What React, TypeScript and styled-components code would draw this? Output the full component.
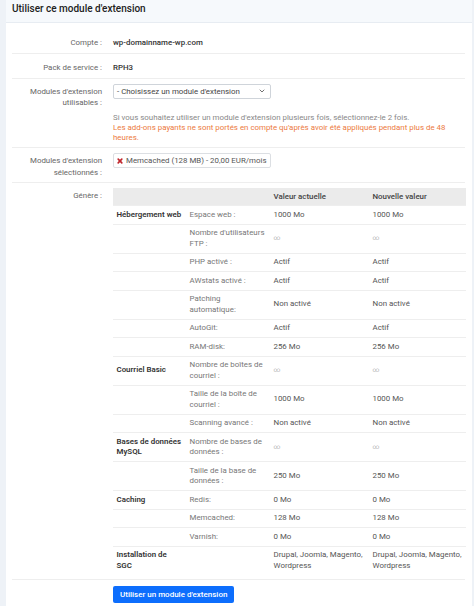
import React from "react";
import styled, { createGlobalStyle } from "styled-components";

const GlobalStyle = createGlobalStyle`
    html, body {
        margin: 0;
        padding: 0;
        background: #eef2f7;
        font-family: Roboto, "Liberation Sans", Arial, sans-serif;
        font-size: 7.9px;
        color: #555;
    }
`;

const Page = styled.div`
    padding: 0 2px 0 6px;
    min-height: 606px;
`;

const Card = styled.div`
    background: #ffffff;
    min-height: 606px;
`;

const CardHeader = styled.div`
    background: #f6f9fc;
    border-bottom: 1px solid #e7ecf2;
    padding: 3px 6px 8px;
    font-size: 10px;
    line-height: 11px;
    font-weight: 500;
    color: #222;
`;

const CardBody = styled.div`
    padding: 5.5px 7px 0 6px;
`;

const FormRow = styled.div<{ $top?: number; $bottom?: number; $noBorder?: boolean }>`
    display: grid;
    grid-template-columns: 90px 1fr;
    column-gap: 11px;
    padding: ${(p) => p.$top ?? 8}px 0 ${(p) => p.$bottom ?? 4.5}px;
    border-bottom: ${(p) => (p.$noBorder ? "none" : "1px solid #eeeeee")};
`;

const Label = styled.div<{ $pad?: number }>`
    text-align: right;
    color: #666;
    line-height: 11.5px;
    padding-top: ${(p) => p.$pad ?? 0}px;
`;

const Value = styled.div<{ $strong?: boolean }>`
    line-height: 11px;
    color: ${(p) => (p.$strong ? "#333" : "#555")};
    font-weight: ${(p) => (p.$strong ? 500 : 400)};
    min-width: 0;
`;

const Select = styled.div`
    width: 158px;
    height: 15px;
    box-sizing: border-box;
    border: 1px solid #cfd4da;
    border-radius: 2px;
    display: flex;
    align-items: center;
    justify-content: space-between;
    padding: 0 4px 0 3px;
    color: #444;
    background: #fff;
`;

const Help = styled.p<{ $warn?: boolean }>`
    margin: 0;
    line-height: 10px;
    color: ${(p) => (p.$warn ? "#ec7a3e" : "#888")};
`;

const HelpBlock = styled.div`
    margin-top: 14.5px;
`;

const Tag = styled.div`
    display: inline-flex;
    align-items: center;
    gap: 3px;
    height: 15px;
    box-sizing: border-box;
    border: 1px solid #dcdfe3;
    border-radius: 2px;
    padding: 0 4px 0 3px;
    color: #555;
`;

const Table = styled.table`
    width: calc(100% + 1px);
    border-collapse: collapse;
    table-layout: fixed;
`;

const Th = styled.th`
    background: #ebebeb;
    text-align: left;
    font-weight: 500;
    color: #444;
    padding: 3px 2px 3px 3.5px;
    line-height: 11px;
`;

const Td = styled.td<{ $kind?: "group" | "label" | "value" | "infinite" }>`
    padding: 3.5px 2px 3.5px 3.5px;
    line-height: 10.5px;
    vertical-align: middle;
    white-space: pre-line;
    border-top: 1px solid #eeeeee;
    font-weight: ${(p) => (p.$kind === "group" ? 600 : 400)};
    font-size: ${(p) => (p.$kind === "infinite" ? "6.5px" : "inherit")};
    color: ${(p) =>
        p.$kind === "group" ? "#333" : p.$kind === "label" ? "#777" : p.$kind === "infinite" ? "#b5b5b5" : "#555"};
`;

const Button = styled.button`
    background: #0d6efd;
    color: #fff;
    border: none;
    border-radius: 2px;
    height: 17px;
    padding: 0 7px;
    font-family: inherit;
    font-size: 8px;
    font-weight: 500;
    cursor: pointer;
`;

function Chevron() {
    return (
        <svg width="8" height="8" viewBox="0 0 24 24" fill="none" stroke="#555" strokeWidth="2.5" strokeLinecap="round" strokeLinejoin="round">
            <path d="m6 9 6 6 6-6" />
        </svg>
    );
}

function RemoveIcon() {
    return (
        <svg width="6" height="6" viewBox="0 0 10 10" stroke="#c0262d" strokeWidth="2.8" strokeLinecap="round">
            <path d="M2 2 8 8M8 2 2 8" />
        </svg>
    );
}

type Row = { group?: string; label: string; current: string; next: string };

const rows: Row[] = [
    { group: "Hébergement web", label: "Espace web :", current: "1000 Mo", next: "1000 Mo" },
    { label: "Nombre d'utilisateurs FTP :", current: "∞", next: "∞" },
    { label: "PHP activé :", current: "Actif", next: "Actif" },
    { label: "AWstats activé :", current: "Actif", next: "Actif" },
    { label: "Patching automatique:", current: "Non activé", next: "Non activé" },
    { label: "AutoGit:", current: "Actif", next: "Actif" },
    { label: "RAM-disk:", current: "256 Mo", next: "256 Mo" },
    { group: "Courriel Basic", label: "Nombre de boîtes de courriel :", current: "∞", next: "∞" },
    { label: "Taille de la boîte de courriel :", current: "1000 Mo", next: "1000 Mo" },
    { label: "Scanning avancé :", current: "Non activé", next: "Non activé" },
    { group: "Bases de données MySQL", label: "Nombre de bases de données :", current: "∞", next: "∞" },
    { label: "Taille de la base de données :", current: "250 Mo", next: "250 Mo" },
    { group: "Caching", label: "Redis:", current: "0 Mo", next: "0 Mo" },
    { label: "Memcached:", current: "128 Mo", next: "128 Mo" },
    { label: "Varnish:", current: "0 Mo", next: "0 Mo" },
    { group: "Installation de\nSGC", label: "", current: "Drupal, Joomla, Magento, Wordpress", next: "Drupal, Joomla, Magento, Wordpress" },
];

export default function App() {
    return (
        <>
            <GlobalStyle />
            <Page>
                <Card>
                    <CardHeader>Utiliser ce module d'extension</CardHeader>
                    <CardBody>
                        <FormRow>
                            <Label>Compte :</Label>
                            <Value $strong>wp-domainname-wp.com</Value>
                        </FormRow>
                        <FormRow>
                            <Label>Pack de service :</Label>
                            <Value $strong>RPH3</Value>
                        </FormRow>
                        <FormRow $top={5} $bottom={4}>
                            <Label $pad={2}>
                                Modules d'extension
                                <br />
                                utilisables :
                            </Label>
                            <Value>
                                <Select>
                                    <span>- Choisissez un module d'extension</span>
                                    <Chevron />
                                </Select>
                                <HelpBlock>
                                    <Help>Si vous souhaitez utiliser un module d'extension plusieurs fois, sélectionnez-le 2 fois.</Help>
                                    <Help $warn>
                                        Les add-ons payants ne sont portés en compte qu'après avoir été appliqués pendant plus de 48 heures.
                                    </Help>
                                </HelpBlock>
                            </Value>
                        </FormRow>
                        <FormRow $top={5} $bottom={4}>
                            <Label $pad={2}>
                                Modules d'extension
                                <br />
                                sélectionnés :
                            </Label>
                            <Value>
                                <Tag>
                                    <RemoveIcon />
                                    Memcached (128 MB) - 20,00 EUR/mois
                                </Tag>
                            </Value>
                        </FormRow>
                        <FormRow $top={5} $bottom={4}>
                            <Label $pad={2}>Génère :</Label>
                            <Value>
                                <Table>
                                    <colgroup>
                                        <col style={{ width: "73px" }} />
                                        <col style={{ width: "84px" }} />
                                        <col style={{ width: "99px" }} />
                                        <col />
                                    </colgroup>
                                    <thead>
                                        <tr>
                                            <Th />
                                            <Th />
                                            <Th>Valeur actuelle</Th>
                                            <Th>Nouvelle valeur</Th>
                                        </tr>
                                    </thead>
                                    <tbody>
                                        {rows.map((r, i) => (
                                            <tr key={i}>
                                                <Td $kind="group">{r.group ?? ""}</Td>
                                                <Td $kind="label">{r.label}</Td>
                                                <Td $kind={r.current === "∞" ? "infinite" : "value"}>{r.current}</Td>
                                                <Td $kind={r.next === "∞" ? "infinite" : "value"}>{r.next}</Td>
                                            </tr>
                                        ))}
                                    </tbody>
                                </Table>
                            </Value>
                        </FormRow>
                        <FormRow $top={6} $noBorder>
                            <div />
                            <div>
                                <Button>Utiliser un module d'extension</Button>
                            </div>
                        </FormRow>
                    </CardBody>
                </Card>
            </Page>
        </>
    );
}
